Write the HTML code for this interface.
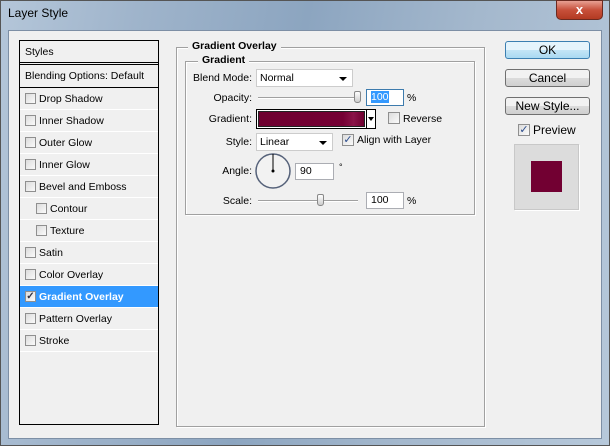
<!DOCTYPE html>
<html><head><style>
*{margin:0;padding:0;box-sizing:border-box}
body{width:610px;height:446px;overflow:hidden;font-family:"Liberation Sans",Tahoma,sans-serif;font-size:10.5px;color:#000;background:#8fa8c4;position:relative}
.a{position:absolute}
.frame{left:0;top:0;width:610px;height:446px;background:linear-gradient(100deg,#b4c6d9 0%,#9fb4cb 20%,#8ca5c0 45%,#a4b8cd 70%,#b6c8da 100%);border:1px solid #555}
.client{left:8px;top:30px;width:594px;height:409px;background:#f0f0f0;border:1px solid #7d8fa5}
.title{left:8px;top:6px;font-size:12px;color:#000;font-family:"Liberation Sans",sans-serif}
.close{left:556px;top:0;width:47px;height:20px;border-radius:0 0 5px 5px;background:linear-gradient(#e8a193,#c7503a 50%,#b33a22);border:1px solid #6b2a20;color:#fff;font-weight:bold;text-align:center;font-size:13px;line-height:18px}
.list{left:19px;top:40px;width:140px;height:385px;border:1px solid #000;background:#f0f0f0}
.row{position:absolute;left:0;width:138px;height:22px;border-bottom:1px solid #fff;line-height:22px}
.cb{position:absolute;width:11px;height:11px;border:1px solid #8f8f8f;background:linear-gradient(135deg,#dcdcdc,#fafafa)}
.gb{border:1px solid #a0a0a0;box-shadow:1px 1px 0 #fff inset,1px 1px 0 #fff}
.leg{position:absolute;background:#f0f0f0;font-weight:bold;padding:0 4px}
.lbl{position:absolute;text-align:right}
.inp{position:absolute;background:#fff;border:1px solid #abadb3;height:17px;line-height:15px;padding-left:4px}
.dd{position:absolute;background:#fff;border:1px solid #ccc;height:18px;line-height:16px;padding-left:3px}
.dd:after{content:"";position:absolute;right:5px;top:7px;border:4px solid transparent;border-top:4px solid #000}
.track{position:absolute;height:2px;border-top:1px solid #a0a0a0;border-bottom:1px solid #fff}
.thumb{position:absolute;width:7px;height:12px;background:linear-gradient(#fff,#ccc);border:1px solid #888;border-radius:2px 2px 3px 3px}
.btn{position:absolute;left:505px;width:85px;height:18px;border:1px solid #707070;border-radius:3px;background:linear-gradient(#f2f2f2 50%,#dcdcdc 50%,#cfcfcf);text-align:center;line-height:16px;font-size:12px}
</style></head><body>
<div class="a frame"></div>
<div class="a title">Layer Style</div>
<div class="a close">x</div>
<div class="a client"></div>

<div class="a list">
 <div class="row" style="top:0;border-bottom:3px double #000;height:24px;padding-left:5px">Styles</div>
 <div class="row" style="top:24px;border-bottom:1px solid #000;height:23px;padding-left:5px">Blending Options: Default</div>
 <div class="row" style="top:47px"><span class="cb" style="left:5px;top:5px"></span><span style="position:absolute;left:19px">Drop Shadow</span></div>
 <div class="row" style="top:69px"><span class="cb" style="left:5px;top:5px"></span><span style="position:absolute;left:19px">Inner Shadow</span></div>
 <div class="row" style="top:91px"><span class="cb" style="left:5px;top:5px"></span><span style="position:absolute;left:19px">Outer Glow</span></div>
 <div class="row" style="top:113px"><span class="cb" style="left:5px;top:5px"></span><span style="position:absolute;left:19px">Inner Glow</span></div>
 <div class="row" style="top:135px"><span class="cb" style="left:5px;top:5px"></span><span style="position:absolute;left:19px">Bevel and Emboss</span></div>
 <div class="row" style="top:157px"><span class="cb" style="left:16px;top:5px"></span><span style="position:absolute;left:30px">Contour</span></div>
 <div class="row" style="top:179px"><span class="cb" style="left:16px;top:5px"></span><span style="position:absolute;left:30px">Texture</span></div>
 <div class="row" style="top:201px"><span class="cb" style="left:5px;top:5px"></span><span style="position:absolute;left:19px">Satin</span></div>
 <div class="row" style="top:223px"><span class="cb" style="left:5px;top:5px"></span><span style="position:absolute;left:19px">Color Overlay</span></div>
 <div class="row" style="top:245px;background:#3399ff;color:#fff;font-weight:bold"><span class="cb" style="left:5px;top:5px;font-size:10px;line-height:9px;color:#334;text-align:center">✓</span><span style="position:absolute;left:19px">Gradient Overlay</span></div>
 <div class="row" style="top:267px"><span class="cb" style="left:5px;top:5px"></span><span style="position:absolute;left:19px">Pattern Overlay</span></div>
 <div class="row" style="top:289px"><span class="cb" style="left:5px;top:5px"></span><span style="position:absolute;left:19px">Stroke</span></div>
</div>

<div class="a gb" style="left:176px;top:47px;width:309px;height:380px"></div>
<div class="leg" style="left:188px;top:40px">Gradient Overlay</div>
<div class="a gb" style="left:185px;top:61px;width:290px;height:154px"></div>
<div class="leg" style="left:198px;top:54px">Gradient</div>

<div class="lbl" style="left:190px;top:72px;width:62px">Blend Mode:</div>
<div class="dd" style="left:256px;top:69px;width:97px">Normal</div>
<div class="lbl" style="left:190px;top:92px;width:62px">Opacity:</div>
<div class="track" style="left:258px;top:97px;width:102px"></div>
<div class="thumb" style="left:354px;top:91px"></div>
<div class="inp" style="left:366px;top:89px;width:38px;border-color:#3d7bad"><span style="background:#3399ff;color:#fff">100</span></div>
<div class="a" style="left:407px;top:92px">%</div>
<div class="lbl" style="left:190px;top:113px;width:62px">Gradient:</div>
<div class="a" style="left:256px;top:109px;width:120px;height:20px;border:1px solid #000;background:#fff">
 <div class="a" style="left:1px;top:1px;width:107px;height:16px;border:1px solid #222;background:linear-gradient(90deg,#6e0030,#750034 80%,#8a1448 90%,#6e0030)"></div>
 <div class="a" style="left:109px;top:0;width:9px;height:18px;border-left:1px solid #000"></div>
 <div class="a" style="left:111px;top:7px;border:3px solid transparent;border-top:4px solid #000"></div>
</div>
<span class="cb" style="left:388px;top:112px;width:12px;height:12px"></span>
<div class="a" style="left:403px;top:113px">Reverse</div>
<div class="lbl" style="left:190px;top:136px;width:62px">Style:</div>
<div class="dd" style="left:256px;top:133px;width:77px">Linear</div>
<span class="cb" style="left:342px;top:134px;width:12px;height:12px;font-size:11px;line-height:10px;text-align:center;color:#2b4c8c">✓</span>
<div class="a" style="left:357px;top:134px">Align with Layer</div>
<div class="lbl" style="left:190px;top:165px;width:62px">Angle:</div>
<svg class="a" style="left:254px;top:152px" width="38" height="38"><circle cx="19" cy="19" r="17" fill="#f2f2f2" stroke="#56627a" stroke-width="1.5"/><line x1="19" y1="19" x2="19" y2="2" stroke="#000"/><circle cx="19" cy="19" r="1.5" fill="#000"/></svg>
<div class="inp" style="left:295px;top:163px;width:39px">90</div>
<div class="a" style="left:339px;top:162px;font-size:9px">°</div>
<div class="lbl" style="left:190px;top:195px;width:62px">Scale:</div>
<div class="track" style="left:258px;top:200px;width:100px"></div>
<div class="thumb" style="left:317px;top:194px"></div>
<div class="inp" style="left:366px;top:192px;width:38px">100</div>
<div class="a" style="left:407px;top:195px">%</div>

<div class="btn" style="top:41px;border-color:#3c7fb1;background:linear-gradient(#e5f4fc 50%,#c4e5f6 50%,#a9d9f2)">OK</div>
<div class="btn" style="top:69px">Cancel</div>
<div class="btn" style="top:97px">New Style...</div>
<span class="cb" style="left:518px;top:124px;width:12px;height:12px;font-size:11px;line-height:10px;text-align:center;color:#2b4c8c">✓</span>
<div class="a" style="left:533px;top:123px;font-size:12px">Preview</div>
<div class="a" style="left:514px;top:144px;width:65px;height:66px;background:#dcdcdc;border:1px solid #c8c8c8;box-shadow:1px 1px 0 #fff"></div>
<div class="a" style="left:531px;top:161px;width:31px;height:31px;background:#720032"></div>
</body></html>
